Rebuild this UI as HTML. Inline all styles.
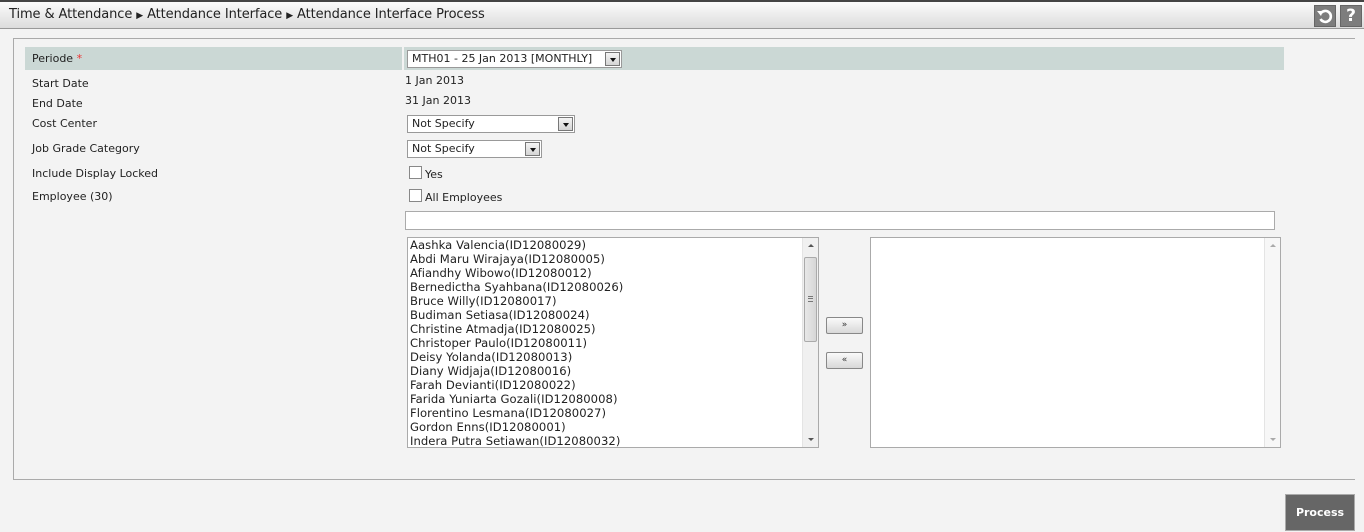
<!DOCTYPE html>
<html><head><meta charset="utf-8"><style>
*{box-sizing:border-box;margin:0;padding:0}
body{width:1364px;height:532px;background:#f3f3f3;font-family:"DejaVu Sans","Liberation Sans",sans-serif;font-size:11px;color:#222;position:relative;overflow:hidden}
.hdr{position:absolute;left:0;top:0;width:1364px;height:29px;border-top:2px solid #444;background:linear-gradient(#fbfbfb,#dcdcdc);border-bottom:1px solid #999}
.crumb{position:absolute;left:9px;top:5px;font-size:13px;color:#222;letter-spacing:-0.1px}
.ib{position:absolute;top:3px;width:22px;height:22px;background:#7d7d7d;border:1px solid #666;color:#fff;font-weight:bold;font-size:17px;text-align:center;line-height:21px}
.panel{position:absolute;left:13px;top:38px;width:1342px;height:442px;border:1px solid #aaa;border-right:none;background:#f3f3f3}
.abs{position:absolute}
.band{position:absolute;left:25px;top:47px;width:1259px;height:23px;background:#cbd8d5}
.bandsep{position:absolute;left:402px;top:47px;width:2px;height:23px;background:#f3f3f3}
.lbl{position:absolute;left:32px}
.sel{position:absolute;background:#fff;border:1px solid #999;height:18px;padding-left:4px;line-height:16px}
.sel .ar{position:absolute;right:1px;top:1px;width:15px;height:14px;background:linear-gradient(#f4f4f4,#d4d4d4);border:1px solid #777}
.sel .ar:after{content:"";position:absolute;left:4px;top:5px;border-left:3px solid transparent;border-right:3px solid transparent;border-top:4px solid #111}
.cb{position:absolute;width:13px;height:13px;border:1px solid #888;background:#fff}
.list{position:absolute;background:#fff;border:1px solid #aaa}
.list div.r{height:14px;line-height:14px;padding-left:2px;white-space:nowrap;font-size:11.6px;letter-spacing:0.05px}
.sb{position:absolute;right:0;top:0;width:16px;height:100%;background:#f0f0f0;border-left:1px solid #e4e4e4}
.up{position:absolute;left:5px;top:6px;border-left:3px solid transparent;border-right:3px solid transparent;border-bottom:3px solid #555}
.dn{position:absolute;left:5px;bottom:6px;border-left:3px solid transparent;border-right:3px solid transparent;border-top:3px solid #555}
.btn{position:absolute;left:826px;width:37px;height:17px;border:1px solid #888;border-radius:2px;background:linear-gradient(#fafafa,#d8d8d8);font-size:9px;text-align:center;line-height:14px;color:#333}
</style></head><body>
<div class="hdr"><div class="crumb">Time &amp; Attendance <span style="font-size:9px">&#9654;</span> Attendance Interface <span style="font-size:9px">&#9654;</span> Attendance Interface Process</div>
<div class="ib" style="left:1314px"><svg width="20" height="20" viewBox="0 0 20 20"><path d="M6 7 A5.5 5.5 0 1 1 5.5 13" fill="none" stroke="#fff" stroke-width="2.6"/><path d="M2 5 L8 5 L6 10Z" fill="#fff"/></svg></div>
<div class="ib" style="left:1340px">?</div></div>
<div class="panel"></div>
<div class="band"></div><div class="bandsep"></div>
<div class="lbl" style="top:52px">Periode <span style="color:#e33">*</span></div>
<div class="sel" style="left:407px;top:50px;width:215px">MTH01 - 25 Jan 2013 [MONTHLY]<span class="ar"></span></div>
<div class="lbl" style="top:77px">Start Date</div><div class="abs" style="left:405px;top:74px">1 Jan 2013</div>
<div class="lbl" style="top:97px">End Date</div><div class="abs" style="left:405px;top:94px">31 Jan 2013</div>
<div class="lbl" style="top:117px">Cost Center</div>
<div class="sel" style="left:407px;top:115px;width:168px">Not Specify<span class="ar"></span></div>
<div class="lbl" style="top:142px">Job Grade Category</div>
<div class="sel" style="left:407px;top:140px;width:135px">Not Specify<span class="ar"></span></div>
<div class="lbl" style="top:167px">Include Display Locked</div>
<div class="cb" style="left:409px;top:166px"></div><div class="abs" style="left:425px;top:168px">Yes</div>
<div class="lbl" style="top:190px">Employee (30)</div>
<div class="cb" style="left:409px;top:189px"></div><div class="abs" style="left:425px;top:191px">All Employees</div>
<div class="abs" style="left:405px;top:211px;width:870px;height:19px;background:#fff;border:1px solid #aaa"></div>
<div class="list" style="left:407px;top:237px;width:412px;height:211px">
<div class="r">Aashka Valencia(ID12080029)</div><div class="r">Abdi Maru Wirajaya(ID12080005)</div><div class="r">Afiandhy Wibowo(ID12080012)</div><div class="r">Bernedictha Syahbana(ID12080026)</div><div class="r">Bruce Willy(ID12080017)</div><div class="r">Budiman Setiasa(ID12080024)</div><div class="r">Christine Atmadja(ID12080025)</div><div class="r">Christoper Paulo(ID12080011)</div><div class="r">Deisy Yolanda(ID12080013)</div><div class="r">Diany Widjaja(ID12080016)</div><div class="r">Farah Devianti(ID12080022)</div><div class="r">Farida Yuniarta Gozali(ID12080008)</div><div class="r">Florentino Lesmana(ID12080027)</div><div class="r">Gordon Enns(ID12080001)</div><div class="r">Indera Putra Setiawan(ID12080032)</div>
<div class="sb"><div class="up"></div><div style="position:absolute;left:1px;top:19px;width:13px;height:85px;background:linear-gradient(90deg,#e8e8e8,#d6d6d6);border:1px solid #aaa;border-radius:2px"><div style="position:absolute;left:3px;top:38px;width:5px;height:6px;border-top:1px solid #777;border-bottom:1px solid #777"></div><div style="position:absolute;left:3px;top:40px;width:5px;height:1px;background:#777"></div></div><div class="dn"></div></div>
</div>
<div class="btn" style="top:317px">&raquo;</div>
<div class="btn" style="top:352px">&laquo;</div>
<div class="list" style="left:870px;top:237px;width:411px;height:211px"><div class="sb" style="background:#f7f7f7"><div class="up" style="border-bottom-color:#aaa"></div><div class="dn" style="border-top-color:#aaa"></div></div></div>
<div class="abs" style="left:1285px;top:494px;width:70px;height:37px;background:#666;border:1px solid #aaa;color:#fff;font-weight:bold;font-size:11px;text-align:center;line-height:35px">Process</div>
</body></html>
